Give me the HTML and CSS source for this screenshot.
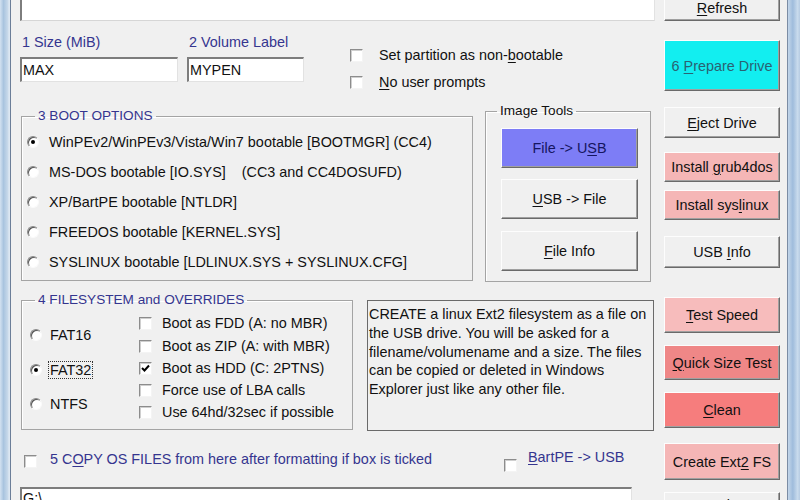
FILE: index.html
```html
<!DOCTYPE html>
<html>
<head>
<meta charset="utf-8">
<link rel="stylesheet" href="styles.css">
</head>
<body>
<div class="window">
  <div class="frame frame-left"></div>
  <div class="dialog">
    <div class="main">
      <div class="topbox"></div>

      <div class="row-fields">
        <div class="field f-size">
          <div class="lbl">1 Size (MiB)</div>
          <div class="input">MAX</div>
        </div>
        <div class="field f-vol">
          <div class="lbl">2 Volume Label</div>
          <div class="input">MYPEN</div>
        </div>
        <div class="opts">
          <div class="check-item"><span class="cb"></span><span class="opt-text">Set partition as non-<u>b</u>ootable</span></div>
          <div class="check-item"><span class="cb"></span><span class="opt-text"><u>N</u>o user prompts</span></div>
        </div>
      </div>

      <div class="row-boot">
        <fieldset class="group boot">
          <legend>3 BOOT OPTIONS</legend>
          <div class="radio-item"><span class="rb checked"></span>WinPEv2/WinPEv3/Vista/Win7 bootable [BOOTMGR] (CC4)</div>
          <div class="radio-item"><span class="rb"></span>MS-DOS bootable [IO.SYS]&nbsp;&nbsp;&nbsp; (CC3 and CC4DOSUFD)</div>
          <div class="radio-item"><span class="rb"></span>XP/BartPE bootable [NTLDR]</div>
          <div class="radio-item"><span class="rb"></span>FREEDOS bootable [KERNEL.SYS]</div>
          <div class="radio-item"><span class="rb"></span>SYSLINUX bootable [LDLINUX.SYS + SYSLINUX.CFG]</div>
        </fieldset>
        <fieldset class="group tools">
          <legend>Image Tools</legend>
          <div class="tool-buttons">
            <button class="btn btn-blue t1">File -&gt; U<u>S</u>B</button>
            <button class="btn t2"><u>U</u>SB -&gt; File</button>
            <button class="btn t3"><u>F</u>ile Info</button>
          </div>
        </fieldset>
      </div>

      <div class="row-fs">
        <fieldset class="group fs">
          <legend>4 FILESYSTEM and OVERRIDES</legend>
          <div class="fs-body">
            <div class="fs-radios">
              <div class="fs-radio"><span class="rb"></span><span>FAT16</span></div>
              <div class="fs-radio"><span class="rb checked"></span><span class="focus">FAT32</span></div>
              <div class="fs-radio"><span class="rb"></span><span>NTFS</span></div>
            </div>
            <div class="fs-checks">
              <div class="fs-check first"><span class="cb"></span>Boot as FDD (A: no MBR)</div>
              <div class="fs-check"><span class="cb"></span>Boot as ZIP (A: with MBR)</div>
              <div class="fs-check"><span class="cb checked"><svg width="11" height="11" viewBox="0 0 11 11"><path d="M2 5 L4.5 7.5 L9 2.5" fill="none" stroke="#000" stroke-width="2"/></svg></span>Boot as HDD (C: 2PTNS)</div>
              <div class="fs-check"><span class="cb"></span>Force use of LBA calls</div>
              <div class="fs-check"><span class="cb"></span>Use 64hd/32sec if possible</div>
            </div>
          </div>
        </fieldset>
        <div class="desc">CREATE a linux Ext2 filesystem as a file on<br>the USB drive. You will be asked for a<br>filename/volumename and a size. The files<br>can be copied or deleted in Windows<br>Explorer just like any other file.</div>
      </div>

      <div class="row-copy">
        <span class="cb copy-cb"></span>
        <span class="copy-text">5 C<u>O</u>PY OS FILES from here after formatting if box is ticked</span>
        <span class="cb bart-cb"></span>
        <span class="bart-text"><u>B</u>artPE -&gt; USB</span>
      </div>

      <div class="input bottombox">G:\</div>
    </div>

    <div class="side">
      <button class="btn b-refresh"><u>R</u>efresh</button>
      <button class="btn btn-cyan b-prepare">6 <u>P</u>repare Drive</button>
      <button class="btn b-eject"><u>E</u>ject Drive</button>
      <button class="btn btn-pink b-grub">Install <u>g</u>rub4dos</button>
      <button class="btn btn-pink b-sys">Install sys<u>l</u>inux</button>
      <button class="btn b-info">USB <u>I</u>nfo</button>
      <button class="btn btn-pink2 b-speed"><u>T</u>est Speed</button>
      <button class="btn btn-red b-quick"><u>Q</u>uick Size Test</button>
      <button class="btn btn-red2 b-clean"><u>C</u>lean</button>
      <button class="btn btn-pink b-ext2">Create Ext<u>2</u> FS</button>
      <button class="btn b-exit">Exit</button>
    </div>
  </div>
  <div class="frame frame-right"></div>
</div>
</body>
</html>
```

FILE: styles.css
```css
* { box-sizing: border-box; }
html, body { margin: 0; padding: 0; }
body {
  width: 800px;
  height: 500px;
  overflow: hidden;
  font-family: "Liberation Sans", Arial, sans-serif;
  font-size: 14.4px;
  color: #111;
  background: #f0f0f0;
}
u { text-decoration: underline; text-underline-offset: 2px; }

.window { display: flex; height: 500px; overflow: hidden; }
.frame-left {
  width: 11px;
  flex: none;
  background: linear-gradient(to right, #d3e2f1 0, #a9c4df 35%, #c6d8ea 75%, #dce7f2 90%);
  border-right: 1px solid #6b7e98;
}
.frame-right {
  width: 13px;
  flex: none;
  background: linear-gradient(to right, #c3d6ea 0, #9fbcdc 40%, #c9dbed 80%, #b6cbe2 100%);
  border-left: 1px solid #7b8ca4;
}
.dialog {
  flex: 1;
  display: flex;
  align-items: flex-start;
  background: #f0f0f0;
  padding-left: 9px;
  min-width: 0;
}
.main { width: 635px; flex: none; display: flex; flex-direction: column; }
.side { width: 116px; flex: none; margin-left: 9px; display: flex; flex-direction: column; }
.main > *, .side > * { flex-shrink: 0; }

/* inputs */
.input {
  background: #fff;
  border-style: solid;
  border-width: 2px 1px 1px 2px;
  border-color: #7d7d7d #e2e2e2 #e2e2e2 #7d7d7d;
  padding: 2px 1px;
  height: 25px;
  line-height: 19px;
  color: #111;
}
.topbox { margin-top: -8px; height: 29px; background: #fff; border-style: solid; border-width: 2px 1px 1px 2px; border-color: #7d7d7d #e2e2e2 #d6d6d6 #7d7d7d; }

.row-fields { display: flex; align-items: flex-start; }
.field .lbl { margin-top: 13px; height: 16px; line-height: 16px; color: #35358f; padding-left: 2px; }
.field .input { margin-top: 7px; }
.f-size { width: 158px; }
.f-vol { width: 117px; margin-left: 9px; }
.opts { margin-left: 46px; padding-top: 24px; }
.check-item { display: flex; align-items: center; height: 20px; }
.check-item + .check-item { margin-top: 7px; }
.opt-text { margin-left: 16px; }

/* checkbox & radio */
.cb {
  display: inline-block;
  flex: none;
  width: 13px;
  height: 13px;
  background: #fff;
  border: 1px solid;
  border-color: #8c8c8c #f4f4f4 #f4f4f4 #8c8c8c;
  box-shadow: inset 1px 1px #cfcfcf;
  position: relative;
}
.cb svg { position: absolute; left: 0; top: 0; }
.rb {
  display: inline-block;
  flex: none;
  width: 12px;
  height: 12px;
  border-radius: 50%;
  background: #fff;
  border: 1px solid;
  border-color: #8a8a8a #fafafa #fafafa #8a8a8a;
  box-shadow: inset 1px 1px #555;
  position: relative;
}
.rb.checked::after {
  content: "";
  position: absolute;
  left: 3px; top: 3px;
  width: 4px; height: 4px;
  border-radius: 50%;
  background: #000;
}

/* group boxes */
fieldset.group {
  margin: 0;
  min-width: 0;
  border: 1px solid #a4a4a4;
  box-shadow: inset 1px 1px #fff;
}
fieldset.group legend {
  padding: 0 3px;
  line-height: 16px;
  height: 16px;
  font-size: 13.6px;
  color: #35358f;
}

.row-boot { display: flex; align-items: flex-start; margin-top: 11px; }
.boot { width: 452px; margin: 5px 0 0 1px !important; padding: 3px 0 3px 5px; }
.boot legend { margin-left: 8px; }
.radio-item { display: flex; align-items: center; height: 30px; }
.radio-item .rb { margin-right: 10px; }

.tools { width: 166px; margin: 0 0 0 12px !important; padding: 0 0 9px 0; height: 179px; }
.tools legend { color: #111 !important; margin-left: 11px; }
.tool-buttons { margin-left: 15px; display: flex; flex-direction: column; }

/* buttons */
.btn {
  font: inherit;
  color: #111;
  background: #f0f0f0;
  border: 1px solid;
  border-color: #fdfdfd #6a6a6a #6a6a6a #fdfdfd;
  box-shadow: inset -1px -1px #a0a0a0;
  padding: 0;
  margin: 0;
  text-align: center;
  width: 100%;
}
.btn-blue { background: #7d7df6; color: #151560; }
.btn-cyan { background: #12eef0; color: #2a6272; }
.btn-pink { background: #f5b6b6; }
.btn-pink2 { background: #f7bcbc; }
.btn-red { background: #ef8787; }
.btn-red2 { background: #f67d7d; }

.t1 { width: 137px; height: 40px; margin-top: 9px; }
.t2 { width: 137px; height: 40px; margin-top: 11px; }
.t3 { width: 137px; height: 40px; margin-top: 12px; }

.b-refresh { margin-top: -5px; height: 26px; }
.b-prepare { margin-top: 19px; height: 51px; }
.b-eject { margin-top: 16px; height: 31px; }
.b-grub { margin-top: 14px; height: 30px; }
.b-sys { margin-top: 8px; height: 30px; }
.b-info { margin-top: 16px; height: 32px; }
.b-speed { margin-top: 29px; height: 36px; }
.b-quick { margin-top: 12px; height: 35px; }
.b-clean { margin-top: 12px; height: 36px; }
.b-ext2 { margin-top: 15px; height: 37px; }
.b-exit { margin-top: 12px; height: 26px; }

/* filesystem */
.row-fs { display: flex; align-items: flex-start; margin-top: 10px; }
.fs { width: 332px; margin: 0 0 0 1px !important; padding: 0 0 6px 8px; }
.fs legend { margin-left: 5px; }
.fs-body { display: flex; }
.fs-radios { width: 109px; padding-top: 10px; }
.fs-radio { display: flex; align-items: center; height: 34.5px; }
.fs-radio .rb { margin-right: 8px; }
.focus { outline: 1px dotted #333; outline-offset: 0; padding: 0 1px; margin-left: -1px; }
.fs-checks { padding-top: 3px; }
.fs-check { display: flex; align-items: center; height: 22px; }
.fs-check.first { height: 24px; }
.fs-check .cb { margin-right: 10px; }

.desc {
  margin: 8px 0 0 14px;
  width: 287px;
  height: 131px;
  border: 1px solid #6a6a6a;
  padding: 4px 0 0 1px;
  line-height: 18.75px;
  white-space: nowrap;
  color: #111;
}

/* copy row */
.row-copy { display: flex; align-items: flex-start; margin-top: 20px; height: 22px; }
.copy-cb { margin: 4px 0 0 4px; }
.copy-text { margin-left: 13px; width: 454px; flex: none; color: #35358f; line-height: 16px; }
.bart-cb { margin-top: 8px; }
.bart-text { margin: -2px 0 0 11px; color: #35358f; line-height: 16px; }

.bottombox { margin-top: 14px; width: 612px; height: 30px; padding-top: 0; }
```
